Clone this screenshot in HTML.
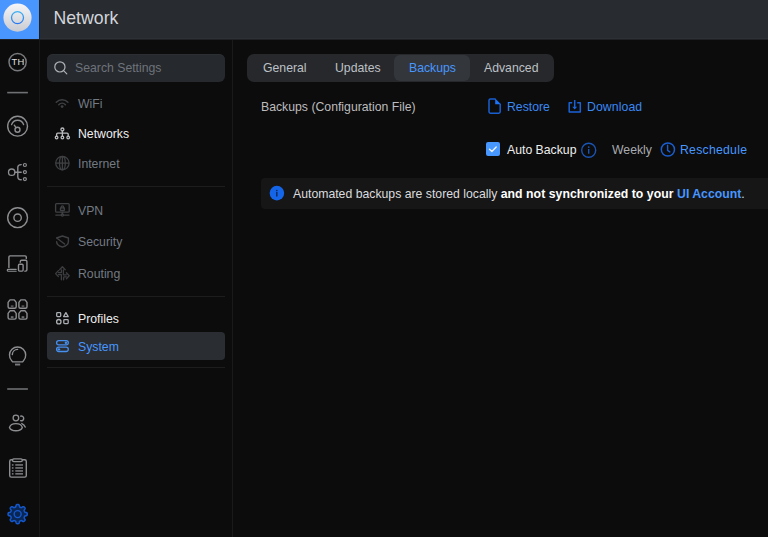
<!DOCTYPE html>
<html><head><meta charset="utf-8">
<style>
*{margin:0;padding:0;box-sizing:border-box}
html,body{width:768px;height:537px;overflow:hidden;background:#0c0c0c;font-family:"Liberation Sans",sans-serif;}
.a{position:absolute}
.t{position:absolute;white-space:nowrap;font-size:12.25px;line-height:14px}
#hdr{left:0;top:0;width:768px;height:40px;background:#282b2f;border-bottom:1px solid #1e2023;box-shadow:inset 0 -1px 0 #2d3034}
#logo{left:0;top:0;width:40px;height:39px;background:#4896fe;border-right:1px solid #1f2022}
#side{left:0;top:40px;width:40px;height:497px;border-right:1px solid #181818;background:#0c0c0c}
#nav{left:40px;top:40px;width:193px;height:497px;border-right:1px solid #1a1a1a}
.sep{position:absolute;height:1px;background:#1d1d1e}
.ico{position:absolute;fill:none;stroke:#8a8c90;stroke-width:1.4}
.gray{color:#737a84}
.white{color:#eeeeee}
.blue{color:#4797ff}
</style></head><body>
<div id="hdr" class="a"></div>
<div id="logo" class="a">
  <svg class="a" style="left:3px;top:3px" width="34" height="34" viewBox="0 0 34 34">
    <defs><linearGradient id="lg" x1="0" y1="0" x2="0" y2="1"><stop offset="0" stop-color="#f6f6f8"/><stop offset="1" stop-color="#c9cbd1"/></linearGradient>
    <linearGradient id="rg" x1="0" y1="0" x2="0" y2="1"><stop offset="0" stop-color="#3eb2f2"/><stop offset="1" stop-color="#2a78f0"/></linearGradient></defs>
    <circle cx="14.5" cy="14.6" r="14.1" fill="url(#lg)"/>
    <circle cx="14.5" cy="14.6" r="6" fill="none" stroke="url(#rg)" stroke-width="1.3"/>
  </svg>
</div>
<div class="t" style="left:53.5px;top:7.3px;font-size:17.7px;line-height:22px;color:#d2d5da">Network</div>

<div id="side" class="a"></div>
<div id="nav" class="a"></div>
<svg class="a" style="left:0;top:0" width="40" height="537" viewBox="0 0 40 537">
<g fill="none" stroke="#8d8e91" stroke-width="1.4" stroke-linecap="round" stroke-linejoin="round">
  <circle cx="17.6" cy="62.1" r="8.6" stroke="#78797c" stroke-width="1.5"/>
  <line x1="7.2" y1="92.6" x2="27.9" y2="92.6" stroke="#6f7073" stroke-width="1.6" stroke-linecap="butt"/>
  <circle cx="17.6" cy="126.2" r="9.9"/>
  <path d="M11.6 124.6 A6.3 6.3 0 0 1 23.6 124.6"/>
  <circle cx="17.5" cy="129.7" r="2.5"/>
  <line x1="14.3" y1="125.2" x2="16" y2="127.6"/>
  <circle cx="11.7" cy="172.2" r="3.2" stroke-width="1.3"/>
  <line x1="14.8" y1="172.2" x2="21.2" y2="172.2"/>
  <path d="M21.2 164.6 Q17.8 164.6 17.8 167.6 L17.8 176.8 Q17.8 179.8 21.2 179.8"/>
  <circle cx="24.9" cy="165" r="1.5" stroke-width="1.2"/>
  <circle cx="24.9" cy="172.1" r="1.5" stroke-width="1.2"/>
  <circle cx="24.9" cy="179.1" r="1.5" stroke-width="1.2"/>
  <circle cx="17.6" cy="217.7" r="9.9"/>
  <circle cx="17.6" cy="217.7" r="3.7"/>
  <path d="M8.9 267.4 L8.9 257 Q8.9 255.9 10 255.9 L25.1 255.9 Q26.3 255.9 26.3 257 L26.3 258.6"/>
  <rect x="20.3" y="260.3" width="6.6" height="10.8" rx="1.3"/>
  <rect x="18.5" y="264.3" width="4.6" height="6.8" rx="1" fill="#0c0c0c" stroke="#0c0c0c" stroke-width="3"/>
  <rect x="18.5" y="264.3" width="4.6" height="6.8" rx="1"/>
  <path d="M16.2 269.4 L8.3 269.4 Q7.2 269.4 7.2 270.3 Q7.2 271.3 8.4 271.3 L16.2 271.3" stroke-width="1.1"/>
</g>
<g fill="none" stroke="#8d8e91" stroke-width="1.4" stroke-linejoin="round">
  <path d="M8.1 302.4 L10.0 299.9 L14.3 299.9 L16.2 302.4 L16.2 306.7 Q16.2 308.2 14.7 308.2 L9.6 308.2 Q8.1 308.2 8.1 306.7 Z"/>
  <path d="M18.9 302.4 L20.8 299.9 L25.1 299.9 L27.0 302.4 L27.0 306.7 Q27.0 308.2 25.5 308.2 L20.4 308.2 Q18.9 308.2 18.9 306.7 Z"/>
  <path d="M8.1 313.3 L10.0 310.8 L14.3 310.8 L16.2 313.3 L16.2 317.6 Q16.2 319.1 14.7 319.1 L9.6 319.1 Q8.1 319.1 8.1 317.6 Z"/>
  <path d="M18.9 313.3 L20.8 310.8 L25.1 310.8 L27.0 313.3 L27.0 317.6 Q27.0 319.1 25.5 319.1 L20.4 319.1 Q18.9 319.1 18.9 317.6 Z"/>
  <rect x="10.8" y="305.5" width="2.7" height="1.2" fill="#6f7073" stroke="none"/>
  <rect x="21.6" y="305.5" width="2.7" height="1.2" fill="#6f7073" stroke="none"/>
  <rect x="10.8" y="316.2" width="2.7" height="2" fill="#6a6b6e" stroke="none"/>
  <rect x="21.6" y="316.2" width="2.7" height="2" fill="#6a6b6e" stroke="none"/>
</g>
<g fill="none" stroke="#8d8e91" stroke-width="1.4" stroke-linecap="round">
  <path d="M12.6 361.9 L11.6 360.6 A8.1 8.1 0 1 1 23.6 360.6 L22.6 361.9 Z" stroke-linejoin="round"/>
  <path d="M12.3 354.6 A5.4 5.4 0 0 1 17.6 349.4"/>
  <rect x="15" y="363.6" width="5.2" height="1.9" fill="#77787b" stroke="none"/>
  <line x1="7.2" y1="389" x2="27.9" y2="389" stroke="#6f7073" stroke-width="1.6" stroke-linecap="butt"/>
  <circle cx="15.9" cy="418" r="2.8" stroke-width="1.3"/>
  <path d="M9.5 427.4 C11 422.4 20.8 422.4 22.3 427.4 C20.8 431.8 11 431.8 9.5 427.4 Z"/>
  <path d="M20.6 416.1 A2.4 2.4 0 1 1 20.6 420.7"/>
  <path d="M21.8 423.6 Q24.2 424.8 25.2 427"/>
  <rect x="9.7" y="459.8" width="16.6" height="17.3" rx="1.6"/>
  <rect x="12.5" y="458.9" width="9.8" height="2.7" rx="1.3" fill="#0c0c0c"/>
</g>
<g fill="#7c7d80">
  <rect x="11.9" y="464.2" width="1.6" height="1.5"/><rect x="15.3" y="464.2" width="7.7" height="1.5"/>
  <rect x="11.9" y="467.2" width="1.6" height="1.5"/><rect x="15.3" y="467.2" width="7.7" height="1.5"/>
  <rect x="11.9" y="470.2" width="1.6" height="1.5"/><rect x="15.3" y="470.2" width="7.7" height="1.5"/>
  <rect x="11.9" y="473.1" width="1.6" height="1.5"/><rect x="15.3" y="473.1" width="7.7" height="1.5"/>
</g>
<path id="gear" d="M17.66 504.50 L17.91 504.51 L18.16 504.53 L18.41 504.57 L18.65 504.64 L18.89 504.79 L19.09 505.07 L19.25 505.53 L19.36 506.10 L19.47 506.56 L19.60 506.85 L19.76 507.01 L19.93 507.12 L20.10 507.21 L20.28 507.28 L20.45 507.36 L20.63 507.43 L20.81 507.50 L20.99 507.56 L21.19 507.61 L21.41 507.60 L21.71 507.49 L22.12 507.24 L22.60 506.92 L23.04 506.70 L23.38 506.65 L23.65 506.71 L23.87 506.83 L24.07 506.98 L24.27 507.14 L24.45 507.31 L24.62 507.49 L24.78 507.69 L24.93 507.89 L25.05 508.11 L25.11 508.38 L25.06 508.72 L24.84 509.16 L24.52 509.64 L24.27 510.05 L24.16 510.35 L24.15 510.57 L24.20 510.77 L24.26 510.95 L24.33 511.13 L24.40 511.31 L24.48 511.48 L24.55 511.66 L24.64 511.83 L24.75 512.00 L24.91 512.16 L25.20 512.29 L25.66 512.40 L26.23 512.51 L26.69 512.67 L26.97 512.87 L27.12 513.11 L27.19 513.35 L27.23 513.60 L27.25 513.85 L27.26 514.10 L27.25 514.35 L27.23 514.60 L27.19 514.85 L27.12 515.09 L26.97 515.33 L26.69 515.53 L26.23 515.69 L25.66 515.80 L25.20 515.91 L24.91 516.04 L24.75 516.20 L24.64 516.37 L24.55 516.54 L24.48 516.72 L24.40 516.89 L24.33 517.07 L24.26 517.25 L24.20 517.43 L24.15 517.63 L24.16 517.85 L24.27 518.15 L24.52 518.56 L24.84 519.04 L25.06 519.48 L25.11 519.82 L25.05 520.09 L24.93 520.31 L24.78 520.51 L24.62 520.71 L24.45 520.89 L24.27 521.06 L24.07 521.22 L23.87 521.37 L23.65 521.49 L23.38 521.55 L23.04 521.50 L22.60 521.28 L22.12 520.96 L21.71 520.71 L21.41 520.60 L21.19 520.59 L20.99 520.64 L20.81 520.70 L20.63 520.77 L20.45 520.84 L20.28 520.92 L20.10 520.99 L19.93 521.08 L19.76 521.19 L19.60 521.35 L19.47 521.64 L19.36 522.10 L19.25 522.67 L19.09 523.13 L18.89 523.41 L18.65 523.56 L18.41 523.63 L18.16 523.67 L17.91 523.69 L17.66 523.70 L17.41 523.69 L17.16 523.67 L16.91 523.63 L16.67 523.56 L16.43 523.41 L16.23 523.13 L16.07 522.67 L15.96 522.10 L15.85 521.64 L15.72 521.35 L15.56 521.19 L15.39 521.08 L15.22 520.99 L15.04 520.92 L14.87 520.84 L14.69 520.77 L14.51 520.70 L14.33 520.64 L14.13 520.59 L13.91 520.60 L13.61 520.71 L13.20 520.96 L12.72 521.28 L12.28 521.50 L11.94 521.55 L11.67 521.49 L11.45 521.37 L11.25 521.22 L11.05 521.06 L10.87 520.89 L10.70 520.71 L10.54 520.51 L10.39 520.31 L10.27 520.09 L10.21 519.82 L10.26 519.48 L10.48 519.04 L10.80 518.56 L11.05 518.15 L11.16 517.85 L11.17 517.63 L11.12 517.43 L11.06 517.25 L10.99 517.07 L10.92 516.89 L10.84 516.72 L10.77 516.54 L10.68 516.37 L10.57 516.20 L10.41 516.04 L10.12 515.91 L9.66 515.80 L9.09 515.69 L8.63 515.53 L8.35 515.33 L8.20 515.09 L8.13 514.85 L8.09 514.60 L8.07 514.35 L8.06 514.10 L8.07 513.85 L8.09 513.60 L8.13 513.35 L8.20 513.11 L8.35 512.87 L8.63 512.67 L9.09 512.51 L9.66 512.40 L10.12 512.29 L10.41 512.16 L10.57 512.00 L10.68 511.83 L10.77 511.66 L10.84 511.48 L10.92 511.31 L10.99 511.13 L11.06 510.95 L11.12 510.77 L11.17 510.57 L11.16 510.35 L11.05 510.05 L10.80 509.64 L10.48 509.16 L10.26 508.72 L10.21 508.38 L10.27 508.11 L10.39 507.89 L10.54 507.69 L10.70 507.49 L10.87 507.31 L11.05 507.14 L11.25 506.98 L11.45 506.83 L11.67 506.71 L11.94 506.65 L12.28 506.70 L12.72 506.92 L13.20 507.24 L13.61 507.49 L13.91 507.60 L14.13 507.61 L14.33 507.56 L14.51 507.50 L14.69 507.43 L14.87 507.36 L15.04 507.28 L15.22 507.21 L15.39 507.12 L15.56 507.01 L15.72 506.85 L15.85 506.56 L15.96 506.10 L16.07 505.53 L16.23 505.07 L16.43 504.79 L16.67 504.64 L16.91 504.57 L17.16 504.53 L17.41 504.51 Z" fill="#0a2754" stroke="#1558cc" stroke-width="1.5" stroke-linejoin="round"/>
<circle cx="17.66" cy="514.1" r="3.5" fill="none" stroke="#1558cc" stroke-width="1.4"/>
</svg>
<div class="t" style="left:11.6px;top:57px;font-size:9.4px;line-height:10px;letter-spacing:0.2px;color:#dfe0e3">TH</div>


<!-- search -->
<div class="a" style="left:47px;top:53.5px;width:178px;height:28.5px;background:#26292d;border-radius:6px;box-shadow:inset 0 1px 0 #2b2e32"></div>
<svg class="a" style="left:53px;top:60px" width="16" height="16" viewBox="0 0 16 16"><circle cx="6.9" cy="6.9" r="5.1" fill="none" stroke="#b0b3b7" stroke-width="1.2"/><path d="M10.6 10.6 L13.8 13.8" stroke="#b0b3b7" stroke-width="1.2" stroke-linecap="round"/></svg>
<div class="t" style="left:75px;top:61px;color:#6e737b">Search Settings</div>

<!-- nav items -->
<div class="t gray" style="left:78px;top:97px">WiFi</div>
<div class="t white" style="left:78px;top:127px">Networks</div>
<div class="t gray" style="left:78px;top:157px">Internet</div>
<div class="sep" style="left:47px;top:186px;width:178px"></div>
<div class="t gray" style="left:78px;top:203.5px">VPN</div>
<div class="t gray" style="left:78px;top:235px">Security</div>
<div class="t gray" style="left:78px;top:267px">Routing</div>
<div class="sep" style="left:47px;top:296px;width:178px"></div>
<div class="t white" style="left:78px;top:312px">Profiles</div>
<div class="a" style="left:47px;top:332px;width:178px;height:28px;background:#2a2d32;border-radius:4px"></div>
<div class="t blue" style="left:78px;top:340px">System</div>
<div class="sep" style="left:47px;top:367px;width:178px"></div>

<!-- tabs -->
<div class="a" style="left:247px;top:54px;width:307px;height:28px;background:#26282c;border-radius:7px"></div>
<div class="a" style="left:394px;top:55px;width:76px;height:25.5px;background:#33363a;border-radius:6px"></div>
<div class="t" style="left:263px;top:61px;color:#bdc0c5">General</div>
<div class="t" style="left:335px;top:61px;color:#bdc0c5">Updates</div>
<div class="t blue" style="left:409px;top:61px">Backups</div>
<div class="t" style="left:484px;top:61px;color:#bdc0c5">Advanced</div>

<div class="t" style="left:261px;top:100px;color:#bcbcbe">Backups (Configuration File)</div>
<div class="t" style="left:507px;top:100px;color:#3a88f4">Restore</div>
<div class="t" style="left:587px;top:100px;color:#3a88f4;letter-spacing:0.1px">Download</div>

<div class="a" style="left:486px;top:142px;width:14px;height:14px;background:#4797ff;border-radius:2px"></div>
<div class="t white" style="left:507px;top:143px">Auto Backup</div>
<div class="t" style="left:612px;top:143px;color:#a9abaf">Weekly</div>
<div class="t blue" style="left:680px;top:143px;letter-spacing:0.25px">Reschedule</div>

<!-- banner -->
<div class="a" style="left:261px;top:178px;width:507px;height:31px;background:#161617;border-radius:4px 0 0 4px"></div>

<div class="t" style="left:293px;top:187px;color:#dcdcde">Automated backups are stored locally <b style="color:#fff;letter-spacing:0.05px">and not synchronized to your </b><b class="blue">UI Account</b>.</div>

<svg class="a" style="left:0;top:0" width="768" height="537" viewBox="0 0 768 537">
<!-- wifi -->
<g fill="none" stroke="#3f4043" stroke-width="1.5" stroke-linecap="round">
  <path d="M56.3 102.2 A8.2 8.2 0 0 1 67.9 102.2"/>
  <path d="M58.8 104.7 A4.7 4.7 0 0 1 65.4 104.7"/>
</g>
<circle cx="62.1" cy="106.6" r="1.4" fill="#3f4043"/>
<!-- networks -->
<g fill="none" stroke="#b9bbbe" stroke-width="1.3" stroke-linecap="round">
  <circle cx="62.4" cy="129.5" r="1.5"/>
  <line x1="62.4" y1="131" x2="62.4" y2="136.1"/>
  <path d="M56.6 136.2 L56.6 134.3 Q56.6 133.2 57.7 133.2 L67.1 133.2 Q68.2 133.2 68.2 134.3 L68.2 136.2"/>
  <circle cx="56.6" cy="137.5" r="1.3"/>
  <circle cx="62.4" cy="137.5" r="1.3"/>
  <circle cx="68.2" cy="137.5" r="1.3"/>
</g>
<!-- globe -->
<g fill="none" stroke="#3f4043" stroke-width="1.3">
  <circle cx="62.4" cy="163.1" r="6.7"/>
  <ellipse cx="62.4" cy="163.1" rx="2.9" ry="6.7"/>
  <line x1="55.7" y1="163.1" x2="69.1" y2="163.1"/>
  <line x1="62.4" y1="156.4" x2="62.4" y2="169.8"/>
</g>
<!-- vpn -->
<g fill="none" stroke="#3f4043" stroke-width="1.3" stroke-linecap="round">
  <rect x="55.6" y="203.6" width="13.6" height="8.6" rx="1"/>
  <rect x="60.4" y="207.9" width="4" height="2.6" rx="0.4"/>
  <path d="M61.2 207.9 L61.2 207.1 A1.2 1.2 0 0 1 63.6 207.1 L63.6 207.9"/>
  <line x1="62.4" y1="212.2" x2="62.4" y2="214"/>
  <line x1="55.8" y1="215.1" x2="61" y2="215.1"/>
  <line x1="63.8" y1="215.1" x2="69" y2="215.1"/>
  <circle cx="62.4" cy="215.1" r="1.1"/>
</g>
<!-- security -->
<g fill="none" stroke="#3f4043" stroke-width="1.4" stroke-linecap="round" stroke-linejoin="round">
  <path d="M56.6 238 L62.4 236 L68.4 238 L68.4 241.5 Q68.4 245.6 62.4 247 Q56.6 245.6 56.6 241.6"/>
  <line x1="57" y1="238.3" x2="64.6" y2="244"/>
</g>
<!-- routing -->
<g fill="none" stroke="#3d3e41" stroke-width="1.3" stroke-linecap="round" stroke-linejoin="round">
  <path d="M59.6 269.8 L62.4 266.8 L65.2 269.8"/>
  <path d="M61.4 269.8 L61.4 272.6 L58.4 272.6"/>
  <path d="M63.4 269.8 L63.4 274.6"/>
  <path d="M58.4 270.6 L55.6 273.6 L58.4 276.6"/>
  <path d="M58.4 274.6 L61.4 274.6 L61.4 279.8"/>
  <path d="M66.4 272.8 L69.2 275.8 L66.4 278.8"/>
  <path d="M66.4 274.8 L63.4 274.8"/>
  <path d="M66.4 276.8 L64.4 276.8 Q63.6 276.8 63.6 277.6 L63.6 279.8"/>
</g>
<!-- profiles -->
<g fill="none" stroke="#abaeb2" stroke-width="1.3" stroke-linejoin="round">
  <rect x="56.7" y="312.6" width="4" height="4" rx="0.8"/>
  <path d="M65.9 312.6 L68.2 316.6 L63.6 316.6 Z"/>
  <circle cx="58.8" cy="321.7" r="2.2"/>
  <rect x="63.8" y="319.6" width="4.4" height="4" rx="0.8"/>
</g>
<!-- system -->
<g fill="none" stroke="#4690f0" stroke-width="1.3">
  <rect x="56.6" y="340.6" width="11.7" height="4.3" rx="2.15"/>
  <rect x="56.6" y="347.2" width="11.7" height="4.3" rx="2.15"/>
</g>
<circle cx="65.9" cy="342.75" r="1.2" fill="#4690f0"/>
<circle cx="58.9" cy="349.35" r="1.2" fill="#4690f0"/>
<!-- file -->
<g fill="none" stroke="#1a5fd1" stroke-width="1.5" stroke-linejoin="round">
  <path d="M495.6 99.1 L490.4 99.1 Q489 99.1 489 100.5 L489 111.8 Q489 113.2 490.4 113.2 L498.8 113.2 Q500.2 113.2 500.2 111.8 L500.2 103.8"/>
</g>
<path d="M495.2 98.4 L500.9 104.2 L495.2 104.2 Z" fill="#1a73f8"/>
<!-- download -->
<g fill="none" stroke="#1a62d8" stroke-width="1.5" stroke-linecap="butt" stroke-linejoin="round">
  <path d="M572.2 102.7 L569.2 102.7 L569.2 111.9 L580.3 111.9 L580.3 102.7 L577.2 102.7"/>
  <line x1="574.7" y1="100" x2="574.7" y2="107.5"/>
</g>
<path d="M572.3 106.8 L577.1 106.8 L574.7 109.4 Z" fill="#1a66e0"/>
<!-- check -->
<path d="M489.5 149.3 L491.9 151.4 L496.2 147.1" fill="none" stroke="#eef4ff" stroke-width="1.4" stroke-linecap="round" stroke-linejoin="round"/>
<!-- info outline -->
<circle cx="588.7" cy="150.3" r="7" fill="none" stroke="#1a55b4" stroke-width="1.4"/>
<circle cx="588.7" cy="147.1" r="0.9" fill="#1a55b4"/>
<line x1="588.7" y1="148.9" x2="588.7" y2="153.8" stroke="#1a55b4" stroke-width="1.4"/>
<!-- clock -->
<circle cx="667.9" cy="149.5" r="6.6" fill="none" stroke="#1a5ed0" stroke-width="1.5"/>
<path d="M667.6 145.3 L667.6 150.4 L669.8 151.9" fill="none" stroke="#1a5ed0" stroke-width="1.4" stroke-linecap="round" stroke-linejoin="round"/>
<!-- info filled -->
<circle cx="276.9" cy="193.1" r="7.3" fill="#1565e8"/>
<circle cx="276.8" cy="190.5" r="0.85" fill="#0c2a62"/>
<line x1="276.8" y1="192" x2="276.8" y2="196.6" stroke="#0c2a62" stroke-width="1.5"/>
</svg>
</body></html>
